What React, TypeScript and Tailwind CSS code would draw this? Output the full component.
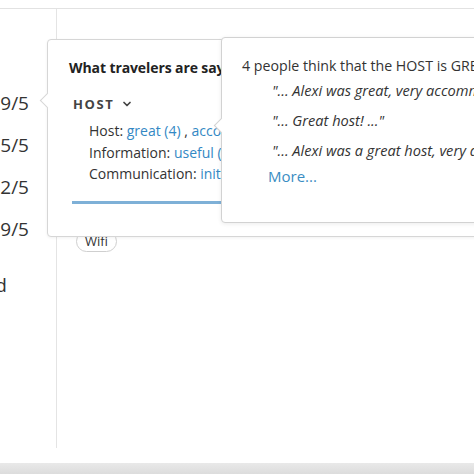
import React from "react";
import { ChevronDown } from "lucide-react";

const font = { fontFamily: '"Open Sans", "Noto Sans", "Liberation Sans", sans-serif' };

export default function App() {
  const scores = ["4.9/5", "4.5/5", "4.2/5", "4.9/5"];
  return (
    <div
      className="relative flex h-[474px] w-[474px] flex-col overflow-hidden bg-white text-[#333]"
      style={font}
    >
      <div className="h-[8px] shrink-0" />
      <div className="flex flex-1 border-t border-[#e2e2e2]">
        <aside className="mb-[15px] w-[57px] shrink-0 overflow-hidden border-r border-[#e4e4e4] pt-[73px]">
          {scores.map((s, i) => (
            <div
              key={i}
              className="flex h-[42px] items-center justify-end whitespace-nowrap pr-[27px] text-[19px] text-[#333]"
            >
              {s}
            </div>
          ))}
          <div className="mt-[14px] flex h-[42px] items-center justify-end whitespace-nowrap pr-[49px] text-[19px] text-[#333]">
            Verified
          </div>
        </aside>
        <main className="flex-1 pl-[19px] pt-[219px]">
          <span className="inline-flex h-[21px] items-center rounded-full border border-[#cfcfcf] px-[8px] text-[13px] text-[#333]">
            Wifi
          </span>
        </main>
      </div>
      <div className="h-[11px] shrink-0 bg-gradient-to-b from-[#e9e9e9] to-[#dcdcdc]" />

      {/* Popup 1 */}
      <div className="absolute left-[47px] top-[39px] h-[198px] w-[460px] rounded-[4px] border border-[#d6d6d6] bg-white shadow-[0_1px_3px_rgba(0,0,0,0.06)]">
        <div className="absolute left-[-6px] top-[55px] h-[11px] w-[11px] rotate-45 border-b border-l border-[#d6d6d6] bg-white" />
        <div className="relative pl-[21px] pt-[18px] pr-[20px]">
          <div className="whitespace-nowrap text-[14px] font-bold leading-[20px] tracking-[-0.1px] text-[#222]">
            What travelers are saying about this place
          </div>
          <div className="mt-[17px] flex items-center gap-[7px] pl-[4px] text-[13px] font-bold leading-[18px] tracking-[1.6px] text-[#444]">
            HOST
            <ChevronDown size={12} strokeWidth={3.5} />
          </div>
          <div className="mt-[7px] pl-[20px] text-[14px] leading-[21.5px] text-[#333]">
            <div className="whitespace-nowrap">
              Host: <span className="text-[#3388c4]">great (4)</span> ,{" "}
              <span className="text-[#3388c4]">accommodating (1)</span>
            </div>
            <div className="whitespace-nowrap">
              Information: <span className="text-[#3388c4]">useful (1)</span>
            </div>
            <div className="whitespace-nowrap">
              Communication: <span className="text-[#3388c4]">initial (1)</span>
            </div>
          </div>
          <div className="ml-[3px] mt-[16px] h-[3px] bg-[#7eb0d7]" />
        </div>
      </div>

      {/* Popup 2 */}
      <div className="absolute left-[221px] top-[37px] h-[186px] w-[300px] rounded-[4px] border border-[#d2d2d2] bg-white shadow-[0_1px_4px_rgba(0,0,0,0.08)]">
        <div className="absolute left-[-6px] top-[82px] h-[11px] w-[11px] rotate-45 border-b border-l border-[#d2d2d2] bg-white" />
        <div className="relative pl-[20px] pt-[17px]">
          <div className="whitespace-nowrap text-[14.2px] leading-[22px] text-[#333]">
            4 people think that the HOST is GREAT
          </div>
          <div className="mt-[-2px] pl-[30px] text-[14.6px] italic leading-[30px] text-[#333]">
            <div className="whitespace-nowrap">"... Alexi was great, very accommodating ..."</div>
            <div className="whitespace-nowrap">"... Great host! ..."</div>
            <div className="whitespace-nowrap">"... Alexi was a great host, very attentive ..."</div>
          </div>
          <div className="pl-[26px] text-[15px] leading-[22px] text-[#3a8dc3]">More...</div>
        </div>
      </div>
    </div>
  );
}
